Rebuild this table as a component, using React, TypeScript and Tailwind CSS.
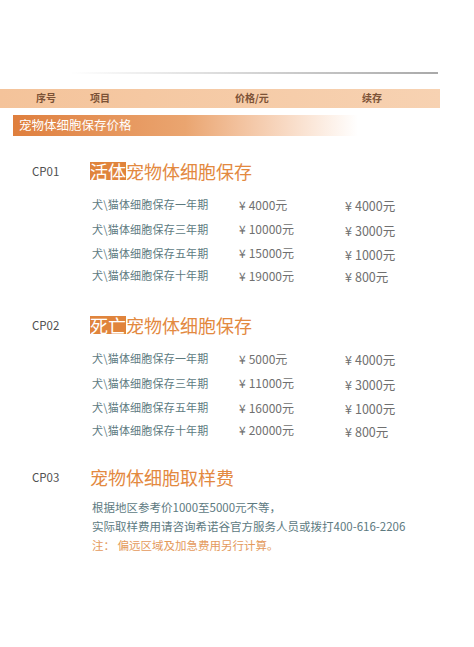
import React from "react";

const font = { fontFamily: '"Noto Sans CJK SC", "Noto Sans", sans-serif' };

type Row = { name: string; price: string; renew: string; h: string };

function PriceRow({ r }: { r: Row }) {
  return (
    <div className={`flex items-center ${r.h}`}>
      <div className="w-[147px] pl-[92px] box-content text-[11px] text-[#5d7a7f] whitespace-nowrap leading-none tracking-[0.2px]">
        {r.name}
      </div>
      <div className="w-[106px] text-[12px] text-[#707070] whitespace-nowrap leading-none">
        <span className="mr-[3px]">¥</span>
        {r.price}元
      </div>
      <div className="text-[12.5px] text-[#707070] whitespace-nowrap leading-none pt-[4px]">
        <span className="mr-[3px]">¥</span>
        {r.renew}元
      </div>
    </div>
  );
}

function Section({
  code,
  hl,
  title,
  rows,
}: {
  code: string;
  hl?: string;
  title: string;
  rows: Row[];
}) {
  return (
    <div>
      <div className="flex items-center h-[24px]">
        <div className="w-[58px] pl-[32px] box-content text-[11.5px] text-[#505050] leading-none pt-[2px]">
          {code}
        </div>
        <div className="text-[18px] leading-none text-[#e3893f] whitespace-nowrap flex items-center">
          {hl && (
            <span className="bg-[#e0843c] text-white h-[18px] flex items-center">{hl}</span>
          )}
          <span>{title}</span>
        </div>
      </div>
      <div className="mt-[10px]">
        {rows.map((r, i) => (
          <PriceRow key={i} r={r} />
        ))}
      </div>
    </div>
  );
}

export default function App() {
  const rows1: Row[] = [
    { name: "犬\\猫体细胞保存一年期", price: "4000", renew: "4000", h: "h-[24px]" },
    { name: "犬\\猫体细胞保存三年期", price: "10000", renew: "3000", h: "h-[25px]" },
    { name: "犬\\猫体细胞保存五年期", price: "15000", renew: "1000", h: "h-[23px]" },
    { name: "犬\\猫体细胞保存十年期", price: "19000", renew: "800", h: "h-[22px]" },
  ];
  const rows2: Row[] = [
    { name: "犬\\猫体细胞保存一年期", price: "5000", renew: "4000", h: "h-[24px]" },
    { name: "犬\\猫体细胞保存三年期", price: "11000", renew: "3000", h: "h-[25px]" },
    { name: "犬\\猫体细胞保存五年期", price: "16000", renew: "1000", h: "h-[24px]" },
    { name: "犬\\猫体细胞保存十年期", price: "20000", renew: "800", h: "h-[21px]" },
  ];
  return (
    <div className="w-[474px] h-[647px] bg-white overflow-hidden" style={font}>
      <div className="h-[72px]" />
      <div className="ml-[70px] w-[368px] h-[1.5px] bg-gradient-to-r from-[#ffffff] via-[#d4d4d4] to-[#a9a9a9]" />
      <div className="mt-[15px] w-[440px] h-[19px] bg-gradient-to-r from-[#f4c39a] to-[#f7d2b2] flex items-center text-[10px] font-bold text-[#7c5236] leading-none">
        <div className="w-[54px] pl-[36px] box-content">序号</div>
        <div className="w-[145px]">项目</div>
        <div className="w-[127px]">价格/元</div>
        <div>续存</div>
      </div>
      <div className="mt-[7px] ml-[13px] w-[345px] h-[21px] bg-gradient-to-r from-[#df7f3d] via-[#eaa570] to-[#ffffff] flex items-center pl-[6px] text-[12.5px] text-white leading-none">
        宠物体细胞保存价格
      </div>
      <div className="mt-[23px]">
        <Section code="CP01" hl="活体" title="宠物体细胞保存" rows={rows1} />
      </div>
      <div className="mt-[26px]">
        <Section code="CP02" hl="死亡" title="宠物体细胞保存" rows={rows2} />
      </div>
      <div className="mt-[24px]">
        <div className="flex items-center h-[24px]">
          <div className="w-[58px] pl-[32px] box-content text-[11.5px] text-[#505050] leading-none pt-[2px]">
            CP03
          </div>
          <div className="text-[18px] leading-none text-[#e3893f] whitespace-nowrap">
            宠物体细胞取样费
          </div>
        </div>
        <div className="mt-[9px] pl-[92px] text-[11.5px] leading-[19px] text-[#5d7a7f] whitespace-nowrap">
          <div>根据地区参考价1000至5000元不等，</div>
          <div>实际取样费用请咨询希诺谷官方服务人员或拨打400-616-2206</div>
          <div className="text-[#e49a5c]">注： 偏远区域及加急费用另行计算。</div>
        </div>
      </div>
    </div>
  );
}
